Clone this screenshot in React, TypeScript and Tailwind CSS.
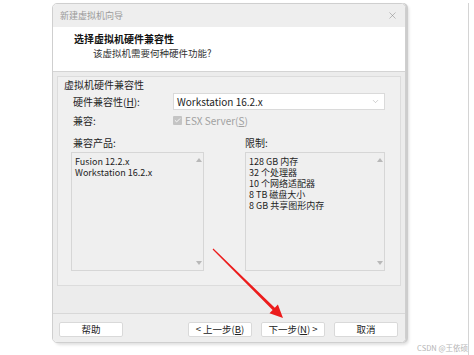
import { ChevronDown, X, Check } from "lucide-react";

const font = "font-['Noto_Sans_CJK_SC','Noto_Sans',sans-serif]";

function Mn({ ch }: { ch: string }) {
  return <span className="underline underline-offset-1">{ch}</span>;
}

function ScrollTri({ up }: { up?: boolean }) {
  return (
    <svg width="6" height="4" viewBox="0 0 6 4" className="fill-[#b8b8b8]">
      {up ? <polygon points="0,4 3,0 6,4" /> : <polygon points="0,0 6,0 3,4" />}
    </svg>
  );
}

function ListBox({ items, className }: { items: string[]; className: string }) {
  return (
    <div className={`flex h-[119px] border border-[#d6d6d6] bg-[#efefef] ${className}`}>
      <div className="flex-1 pl-[3px] pt-[3px] text-[9px] leading-[11px] text-[#1e1e1e]">
        {items.map((t) => (
          <div key={t}>{t}</div>
        ))}
      </div>
      <div className="flex w-[9px] flex-col items-center justify-between py-[5px]">
        <ScrollTri up />
        <ScrollTri />
      </div>
    </div>
  );
}

function Btn({ children }: { children: React.ReactNode }) {
  return (
    <button className="flex h-[15px] w-[64px] items-center justify-center rounded-[2px] border border-[#d9d9d9] bg-white text-[9.5px] leading-none text-[#222]">
      {children}
    </button>
  );
}

export default function App() {
  return (
    <div className={`relative flex h-[355px] w-[474px] overflow-hidden bg-white pl-[52px] pt-[3px] ${font}`}>
      {/* wizard dialog */}
      <div className="flex h-[340px] w-[354px] flex-col overflow-hidden rounded-[5px] border border-[#cfcfcf] shadow-[2px_0_0_#cdcdcd,3px_2px_3px_rgba(0,0,0,0.12)]">
        <div className="flex h-[23px] items-center justify-between bg-[#eeeeee] pl-[7px] pr-[7px]">
          <span className="text-[9px] text-[#9a9a9a]">新建虚拟机向导</span>
          <X size={11} strokeWidth={1} className="text-[#777]" />
        </div>

        <div className="h-[44px] bg-white pl-[21px] pt-[5px]">
          <div className="text-[10px] font-bold leading-[14px] text-[#111]">选择虚拟机硬件兼容性</div>
          <div className="pl-[19px] text-[9.5px] leading-[14px] text-[#333]">该虚拟机需要何种硬件功能?</div>
        </div>

        <div className="flex h-[242px] flex-col border-t border-[#d4d4d4] bg-[#ececec] px-[4px] pt-[4px]">
          <div className="h-[210px] border border-[#dcdcdc] bg-[#f0f0f0] px-[6px] pt-[1px] text-[10px] text-[#1e1e1e]">
            <div className="leading-[14px]">虚拟机硬件兼容性</div>

            <div className="mt-[1px] flex items-center pl-[9px]">
              <span className="w-[100px]">
                硬件兼容性(<Mn ch="H" />):
              </span>
              <div className="flex h-[17px] w-[212px] items-center justify-between border border-[#dadada] bg-white pl-[3px] pr-[4px]">
                <span>Workstation 16.2.x</span>
                <ChevronDown size={9} strokeWidth={1.2} className="text-[#999]" />
              </div>
            </div>

            <div className="mt-[2px] flex h-[16px] items-center pl-[9px]">
              <span className="w-[100px]">兼容:</span>
              <span className="flex h-[9px] w-[9px] items-center justify-center rounded-[1px] bg-[#c4c4c4]">
                <Check size={7} strokeWidth={3} className="text-white" />
              </span>
              <span className="ml-[3px] text-[#a0a0a0]">
                ESX Server(<Mn ch="S" />)
              </span>
            </div>

            <div className="mt-[8px] flex pl-[7px] pr-[7px]">
              <div className="w-[174px]">
                <div className="pl-[2px] leading-[14px]">兼容产品:</div>
                <ListBox className="mt-[2px] w-[133px]" items={["Fusion 12.2.x", "Workstation 16.2.x"]} />
              </div>
              <div className="w-[140px]">
                <div className="leading-[14px]">限制:</div>
                <ListBox
                  className="mt-[2px] w-[140px]"
                  items={["128 GB 内存", "32 个处理器", "10 个网络适配器", "8 TB 磁盘大小", "8 GB 共享图形内存"]}
                />
              </div>
            </div>
          </div>
        </div>

        <div className="flex flex-1 items-start border-t border-[#d8d8d8] bg-[#eeeeee] pl-[6px] pr-[7px] pt-[8px]">
          <Btn>帮助</Btn>
          <div className="ml-auto flex gap-[9px]">
            <Btn>
              &lt; 上一步(<Mn ch="B" />)
            </Btn>
            <Btn>
              下一步(<Mn ch="N" />) &gt;
            </Btn>
            <Btn>取消</Btn>
          </div>
        </div>
      </div>

      {/* edge of the window behind */}
      <div className="ml-auto mr-[5px] h-full w-[1px] bg-[#d4d4d4]" />

      {/* red annotation arrow */}
      <svg className="absolute left-0 top-0" width="474" height="355" viewBox="0 0 474 355">
        <polygon
          fill="#ec1c1c"
          points="212.6,249.4 213.4,248.6 274.8,307.8 277.9,304.6 283,318 269.5,313.2 272.6,310"
        />
      </svg>

      <span className="absolute bottom-[2px] right-[6px] text-[7.5px] text-[#b5b5b5]">CSDN @王依硕</span>
    </div>
  );
}
